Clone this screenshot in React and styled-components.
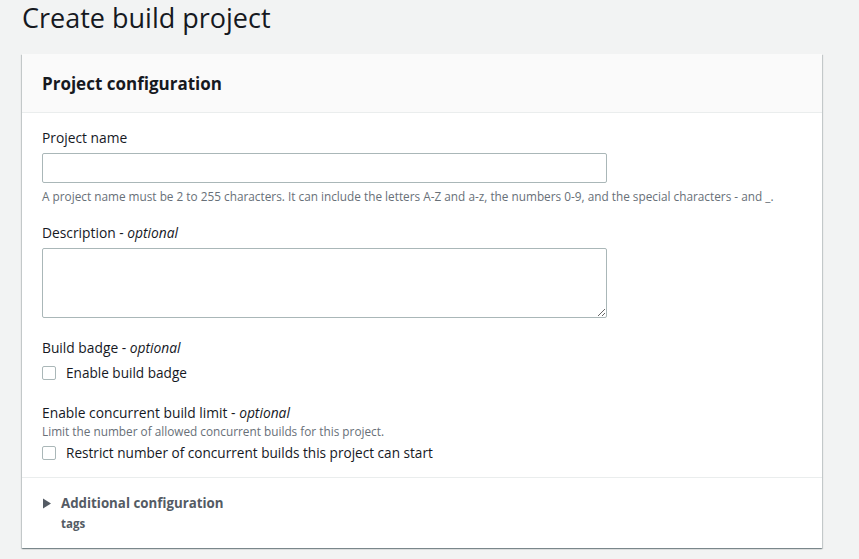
import React from 'react';
import styled, { createGlobalStyle } from 'styled-components';

const GlobalStyle = createGlobalStyle`
    html, body {
        margin: 0;
        padding: 0;
        background: #f2f3f3;
    }
    body {
        font-family: 'Open Sans', 'Noto Sans', sans-serif;
        color: #16191f;
    }
`;

const Page = styled.div`
    padding: 0 37px 10px 22px;
`;

const Title = styled.h1`
    margin: 0;
    padding-top: 1px;
    height: 53px;
    font-size: 27px;
    font-weight: 400;
    line-height: 34px;
    color: #16191f;
`;

const Card = styled.section`
    background: #fff;
    box-shadow: 0 1px 1px 0 rgba(0, 28, 36, 0.3), 1px 1px 1px 0 rgba(0, 28, 36, 0.15), -1px 1px 1px 0 rgba(0, 28, 36, 0.15);
`;

const CardHeader = styled.header`
    background: #fafafa;
    border-bottom: 1px solid #eaeded;
    height: 58px;
    padding: 0 20px;
    display: flex;
    align-items: center;
    h2 {
        margin: 0;
        font-size: 17px;
        font-weight: 700;
    }
`;

const CardBody = styled.div`
    padding: 14px 20px 13px;
    display: flex;
    flex-direction: column;
    gap: 18px;
    border-bottom: 1px solid #eaeded;
`;

const Field = styled.div`
    display: flex;
    flex-direction: column;
    margin-top: ${p => p.$top || 0}px;
`;

const Label = styled.label`
    font-size: 13.8px;
    line-height: 22px;
    margin-bottom: ${p => p.$gap ?? 4}px;
    em {
        font-style: italic;
    }
`;

const Hint = styled.div`
    font-size: 11.8px;
    line-height: ${p => p.$lh || 16}px;
    color: #687078;
    margin-bottom: ${p => p.$bottom || 0}px;
`;

const TextInput = styled.input`
    box-sizing: border-box;
    width: 565px;
    height: 30px;
    border: 1px solid #aab7b8;
    border-radius: 2px;
    background: #fff;
    margin: 0 0 5px;
`;

const TextArea = styled.textarea`
    box-sizing: border-box;
    width: 565px;
    height: 70px;
    border: 1px solid #aab7b8;
    border-radius: 2px;
    background: #fff;
    margin: 0;
    display: block;
`;

const CheckRow = styled.label`
    display: flex;
    align-items: center;
    gap: 10px;
    font-size: 13.6px;
    line-height: 22px;
`;

const Box = styled.span`
    box-sizing: border-box;
    width: 14px;
    height: 14px;
    border: 1px solid #aab7b8;
    border-radius: 2px;
    background: #fff;
    flex: none;
`;

const Expander = styled.div`
    padding: 14px 20px 14px;
    display: grid;
    grid-template-columns: 19px auto;
    align-items: center;
    .head {
        font-size: 13.3px;
        font-weight: 700;
        line-height: 22px;
        color: #545b64;
    }
    .sub {
        grid-column: 2;
        font-size: 11.5px;
        font-weight: 700;
        line-height: 20px;
        color: #545b64;
    }
`;

const Caret = () => (
    <svg width="9" height="11" viewBox="0 0 9 11" style={{ marginLeft: 1 }}>
        <path d="M0 0.5 L8 5.5 L0 10.5 Z" fill="#545b64" />
    </svg>
);

const App = () => (
    <>
        <GlobalStyle />
        <Page>
            <Title>Create build project</Title>
            <Card>
                <CardHeader><h2>Project configuration</h2></CardHeader>
                <CardBody>
                    <Field>
                        <Label>Project name</Label>
                        <TextInput />
                        <Hint>A project name must be 2 to 255 characters. It can include the letters A-Z and a-z, the numbers 0-9, and the special characters - and _.</Hint>
                    </Field>
                    <Field>
                        <Label>Description - <em>optional</em></Label>
                        <TextArea />
                    </Field>
                    <Field $top={1}>
                        <Label $gap={3}>Build badge - <em>optional</em></Label>
                        <CheckRow><Box />Enable build badge</CheckRow>
                    </Field>
                    <Field>
                        <Label $gap={0}>Enable concurrent build limit - <em>optional</em></Label>
                        <Hint $lh={14} $bottom={4}>Limit the number of allowed concurrent builds for this project.</Hint>
                        <CheckRow><Box />Restrict number of concurrent builds this project can start</CheckRow>
                    </Field>
                </CardBody>
                <Expander>
                    <Caret />
                    <span className="head">Additional configuration</span>
                    <span className="sub">tags</span>
                </Expander>
            </Card>
        </Page>
    </>
);

export default App;
